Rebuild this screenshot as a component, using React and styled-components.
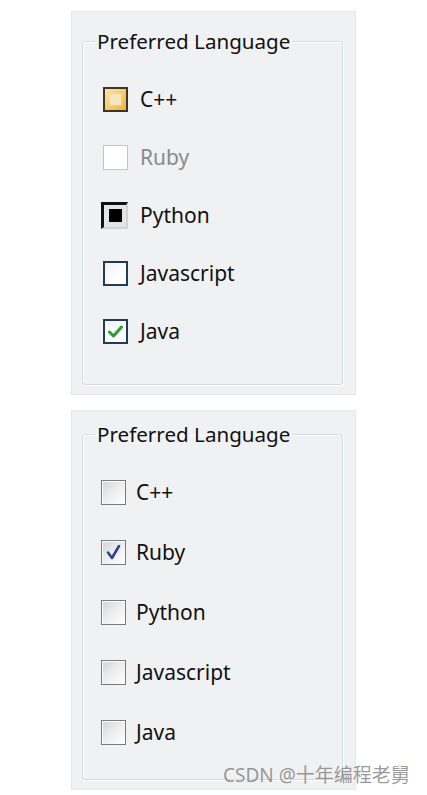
import React from 'react';
import styled, { createGlobalStyle, css } from 'styled-components';

const GlobalStyle = createGlobalStyle`
  html, body {
    margin: 0;
    background: #ffffff;
  }
  body {
    font-family: "Noto Sans", "DejaVu Sans", sans-serif;
  }
`;

const Page = styled.div`
  position: relative;
  width: 427px;
  height: 795px;
  padding: 11px 0 0 71px;
  box-sizing: border-box;
  display: flex;
  flex-direction: column;
  gap: 15px;
`;

const Panel = styled.div`
  width: 285px;
  height: ${p => p.$height}px;
  box-sizing: border-box;
  background: #f0f1f3;
  border: 1px solid #e6e7e9;
  padding: ${p => p.$top}px 12px 9px 10px;
  display: flex;
`;

const Group = styled.fieldset`
  flex: 1;
  margin: 0;
  padding: 0;
  border: 1px solid #d3dce2;
  border-radius: 3px;
  box-shadow: inset 1px 1px 0 #ffffff, 1px 1px 0 #ffffff;
  display: flex;
  flex-direction: column;
`;

const Legend = styled.legend`
  margin-left: 12px;
  padding: 0 2px;
  font-size: 20.6px;
  line-height: 24px;
  color: #111;
`;

const List = styled.div`
  display: flex;
  flex-direction: column;
  padding-top: ${p => p.$top}px;
  padding-left: ${p => p.$left}px;
`;

const Row = styled.label`
  height: ${p => p.$h}px;
  display: flex;
  align-items: center;
  gap: ${p => p.$gap}px;
  font-size: 21px;
  color: ${p => (p.$disabled ? '#8a8a8a' : '#111')};
`;

const boxStyles = {
  hot: css`
    border: 2px solid #3b3428;
    background: linear-gradient(135deg, #fde6a6 0%, #f6c965 55%, #eeb143 100%);
    &::after {
      content: '';
      width: 11px;
      height: 11px;
      background: #f6e6bd;
      box-shadow: 0 0 3px #f7dca0;
    }
  `,
  disabled: css`
    border: 1px solid #c4c4c4;
    background: #ffffff;
  `,
  mixed: css`
    width: 27px;
    height: 27px;
    margin-left: -2px;
    border-top: 3px solid #111;
    border-left: 3px solid #111;
    border-right: 2px solid #d2d2d2;
    border-bottom: 2px solid #d2d2d2;
    background: #e4e4e4;
    &::after {
      content: '';
      width: 13px;
      height: 13px;
      background: #000;
    }
  `,
  normal: css`
    border: 2px solid #213a57;
    background: linear-gradient(135deg, #f2f2f2 0%, #ffffff 70%);
  `,
  classic: css`
    border: 1px solid #7a7a7a;
    background: linear-gradient(135deg, #d2d2d2 0%, #ececec 45%, #ffffff 100%);
    box-shadow: inset 1px 1px 0 #ffffff;
  `,
};

const Box = styled.span`
  width: 25px;
  height: 25px;
  box-sizing: border-box;
  flex: none;
  display: flex;
  align-items: center;
  justify-content: center;
  ${p => boxStyles[p.$kind]}
`;

const Watermark = styled.div`
  position: absolute;
  left: 223px;
  top: 763px;
  font-family: "Noto Sans", "Noto Sans CJK SC", sans-serif;
  font-size: 19px;
  line-height: 24px;
  color: rgba(120, 120, 120, 0.75);
  white-space: nowrap;
`;

const GreenCheck = () => (
  <svg width="15" height="13" viewBox="0 0 15 13">
    <path d="M1.5 7 L5.5 11 L13.5 2" fill="none" stroke="#2e9a3a" strokeWidth="3" strokeLinecap="round" strokeLinejoin="round" />
  </svg>
);

const BlueCheck = () => (
  <svg width="15" height="16" viewBox="0 0 15 16">
    <path d="M2 8.5 L6 14 L13 2" fill="none" stroke="#2a4790" strokeWidth="2.6" strokeLinecap="round" strokeLinejoin="round" />
  </svg>
);

const first = [
  { label: 'C++', kind: 'hot' },
  { label: 'Ruby', kind: 'disabled', disabled: true },
  { label: 'Python', kind: 'mixed' },
  { label: 'Javascript', kind: 'normal' },
  { label: 'Java', kind: 'normal', check: <GreenCheck /> },
];

const second = [
  { label: 'C++' },
  { label: 'Ruby', check: <BlueCheck /> },
  { label: 'Python' },
  { label: 'Javascript' },
  { label: 'Java' },
];

export default function App() {
  return (
    <>
      <GlobalStyle />
      <Page>
        <Panel $height={384} $top={17}>
          <Group>
            <Legend>Preferred Language</Legend>
            <List $top={17} $left={20}>
              {first.map(item => (
                <Row key={item.label} $h={58} $gap={12} $disabled={item.disabled}>
                  <Box $kind={item.kind}>{item.check}</Box>
                  {item.label}
                </Row>
              ))}
            </List>
          </Group>
        </Panel>
        <Panel $height={380} $top={11}>
          <Group>
            <Legend>Preferred Language</Legend>
            <List $top={16} $left={18}>
              {second.map(item => (
                <Row key={item.label} $h={60} $gap={10}>
                  <Box $kind="classic">{item.check}</Box>
                  {item.label}
                </Row>
              ))}
            </List>
          </Group>
        </Panel>
        <Watermark>CSDN @十年编程老舅</Watermark>
      </Page>
    </>
  );
}
